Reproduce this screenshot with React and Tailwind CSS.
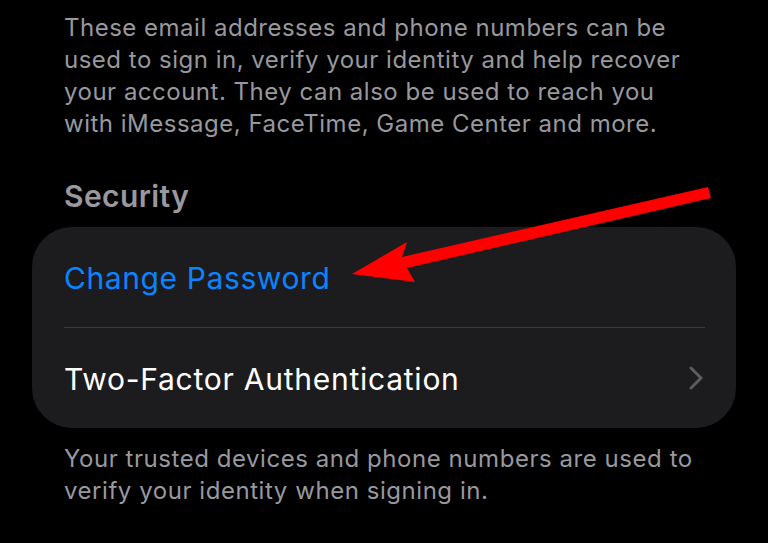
export default function App() {
  return (
    <div className="relative w-[768px] h-[543px] overflow-hidden bg-black" style={{ fontFamily: 'Inter, "Noto Sans", sans-serif' }}>
      <div className="pt-[12px]">
        <p className="px-16 text-[24px] leading-[32px] text-[#98989f] tracking-[0.5px]">
          These email addresses and phone numbers can be used to sign in, verify your identity and help recover your account. They can also be used to reach you with iMessage, FaceTime, Game Center and more.
        </p>
        <h2 className="px-16 mt-[38px] text-[30px] leading-[36px] font-semibold text-[#98989f] tracking-[0.4px]">Security</h2>
        <div className="mx-8 mt-[13px] h-[201px] rounded-[40px] bg-[#1c1c1e] flex flex-col">
          <div className="h-[100px] flex items-center pl-8 pr-8 pt-[3px]">
            <span className="text-[30px] text-[#0a84ff] tracking-[0.6px]">Change Password</span>
          </div>
          <div className="ml-8 mr-[31px] h-[1px] bg-[#3a3a3c]"></div>
          <div className="flex-1 flex items-center justify-between pl-8 pr-[33px] pt-[3px]">
            <span className="text-[30px] text-white tracking-[0.75px]">Two-Factor Authentication</span>
            <svg width="14" height="24" viewBox="0 0 14 24" fill="none" className="-mt-[3px]">
              <path d="M2 2 L12 12 L2 22" stroke="#5b5b60" strokeWidth="3" strokeLinecap="round" strokeLinejoin="round" />
            </svg>
          </div>
        </div>
        <p className="px-16 mt-[15px] text-[24px] leading-[32px] text-[#98989f] tracking-[0.55px]">
          Your trusted devices and phone numbers are used to verify your identity when signing in.
        </p>
      </div>
      <svg className="absolute left-0 top-0 pointer-events-none" width="768" height="543" viewBox="0 0 768 543">
        <polygon points="352,274 407,242 402,257 708,187 711,198 407,268 415,282" fill="#ff0000" />
      </svg>
    </div>
  );
}
